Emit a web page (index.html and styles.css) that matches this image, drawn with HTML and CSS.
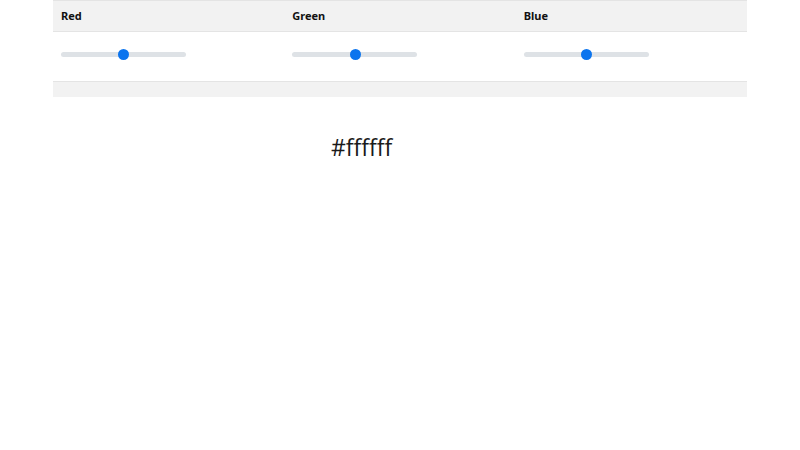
FILE: index.html
```html
<!DOCTYPE html>
<html>
<head>
<meta charset="utf-8">
<link rel="stylesheet" href="styles.css">
</head>
<body>
<div class="wrap">
  <table class="tbl">
    <thead>
      <tr><th>Red</th><th>Green</th><th>Blue</th></tr>
    </thead>
    <tbody>
      <tr>
        <td><input type="range" class="rng" min="0" max="255" value="128"></td>
        <td><input type="range" class="rng" min="0" max="255" value="128"></td>
        <td><input type="range" class="rng" min="0" max="255" value="128"></td>
      </tr>
      <tr class="foot"><td></td><td></td><td></td></tr>
    </tbody>
  </table>
  <div class="hex">#ffffff</div>
</div>
</body>
</html>
```
FILE: styles.css
```css
html, body {
  margin: 0;
  padding: 0;
  background: #fff;
}
body {
  font-family: "Noto Sans", "Open Sans", sans-serif;
  color: #212529;
}
.wrap {
  width: 694px;
  margin: 0 auto;
}
.tbl {
  width: 100%;
  border-collapse: collapse;
  table-layout: fixed;
}
.tbl th {
  text-align: left;
  font-size: 11px;
  font-weight: 700;
  background: #f2f2f2;
  height: 28px;
  padding: 0 8px 2px;
  border-top: 1px solid #e4e4e4;
  border-bottom: 1px solid #e4e4e4;
  color: #111;
}
.tbl td {
  padding: 0 8px 4px;
  height: 45px;
  border-bottom: 1px solid #e4e4e4;
  vertical-align: middle;
}
.tbl .foot td {
  height: 15px;
  padding: 0 8px;
  background: #f2f2f2;
  border-bottom: none;
}
.rng {
  -webkit-appearance: none;
  appearance: none;
  width: 125px;
  height: 11px;
  margin: 0;
  padding: 0;
  display: block;
  background: transparent;
}
.rng::-webkit-slider-runnable-track {
  height: 5px;
  background: #dee2e6;
  border-radius: 3px;
}
.rng::-webkit-slider-thumb {
  -webkit-appearance: none;
  appearance: none;
  width: 11px;
  height: 11px;
  border-radius: 50%;
  background: #0b74ee;
  border: none;
  margin-top: -3px;
}
.hex {
  margin-top: 36px;
  padding-left: 278px;
  font-size: 23px;
  font-family: "Open Sans", "Noto Sans", sans-serif;
  color: #1a1a1a;
  line-height: 28px;
}
```
